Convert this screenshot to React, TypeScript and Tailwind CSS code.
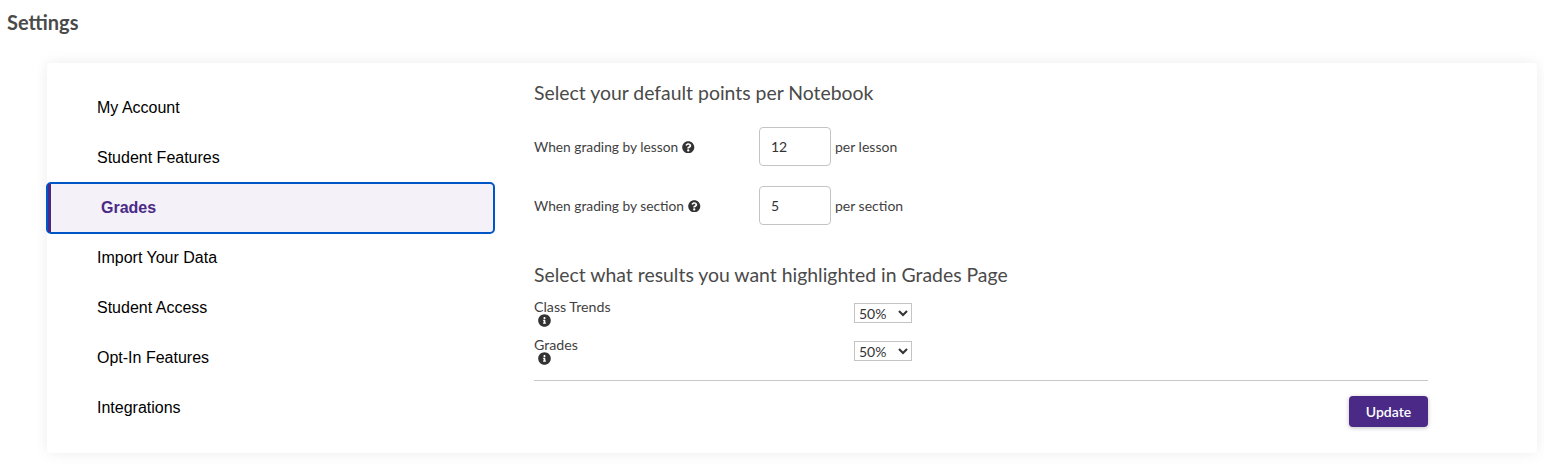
import React from 'react'
import { FaInfoCircle, FaQuestionCircle } from 'react-icons/fa'

const navItems = ['My Account', 'Student Features', 'Grades', 'Import Your Data', 'Student Access', 'Opt-In Features', 'Integrations']

const NavItem: React.FC<{ label: string }> = ({ label }) => {
  if (label === 'Grades') {
    return (
      <div className="h-[52px] -my-px relative z-10 flex items-center rounded-[5px] border-2 border-[#0056c7] bg-[#f4f1f8] pl-[53px] text-[16px] font-bold text-[#4a2a86]">
        <span className="absolute left-0 top-0 bottom-0 w-[3px] bg-[#4a2a86]" />
        {label}
      </div>
    )
  }
  return <div className="h-[50px] flex items-center pl-[51px] text-[16px] text-black">{label}</div>
}

const PointsRow: React.FC<{ label: string; value: string; unit: string }> = ({ label, value, unit }) => (
  <div className="flex items-center h-[39px]">
    <span className="w-[225px] pt-px flex items-center gap-1 text-[13.75px] text-[#3f3f3f]">
      {label}
      <FaQuestionCircle className="text-[12.5px] text-[#333]" />
    </span>
    <input
      readOnly
      value={value}
      className="w-[72px] h-[39px] rounded-[4px] border border-[#c4c4c4] px-[11px] text-[14px] text-[#333]"
    />
    <span className="ml-1 text-[14px] text-[#3f3f3f]">{unit}</span>
  </div>
)

const HighlightRow: React.FC<{ label: string }> = ({ label }) => (
  <div className="flex items-center h-[38px]">
    <div className="w-[320px] text-[14.2px] leading-[14px] text-[#3f3f3f]">
      <div>{label}</div>
      <FaInfoCircle className="ml-[4px] text-[13px] text-[#333]" />
    </div>
    <select className="w-[58px] h-[20px] border border-[#c4c4c4] bg-white text-[14px] text-[#333]">
      <option>50%</option>
    </select>
  </div>
)

export default function App() {
  return (
    <div className="w-[1544px] h-[464px] overflow-hidden bg-white font-['Lato',sans-serif]">
      <h1 className="pl-[7px] pt-[10px] h-[63px] text-[20px] leading-[24px] font-bold text-[#4a4a4a]">Settings</h1>
      <div className="ml-[47px] w-[1490px] h-[390px] flex rounded-[4px] bg-white shadow-[0_0_14px_rgba(0,0,0,0.08)]">
        <nav className="w-[449px] -ml-px pt-[20px] shrink-0 font-['Liberation_Sans',sans-serif]">
          {navItems.map((item) => (
            <NavItem key={item} label={item} />
          ))}
        </nav>
        <div className="ml-[39px] w-[894px] pt-[17px]">
          <h2 className="text-[19.4px] leading-[26px] text-[#4a4a4a]">Select your default points per Notebook</h2>
          <div className="mt-[21px] flex flex-col gap-5">
            <PointsRow label="When grading by lesson" value="12" unit="per lesson" />
            <PointsRow label="When grading by section" value="5" unit="per section" />
          </div>
          <h2 className="mt-[37px] text-[19.4px] leading-[26px] text-[#4a4a4a]">Select what results you want highlighted in Grades Page</h2>
          <div className="mt-[6px]">
            <HighlightRow label="Class Trends" />
            <HighlightRow label="Grades" />
          </div>
          <div className="mt-[10px] border-t border-[#c8c8c8]" />
          <div className="mt-[15px] flex justify-end">
            <button className="w-[79px] h-[31px] rounded-[4px] bg-[#4a2a86] text-[14px] font-semibold text-white shadow-[0_1px_4px_rgba(0,0,0,0.25)]">
              Update
            </button>
          </div>
        </div>
      </div>
    </div>
  )
}
